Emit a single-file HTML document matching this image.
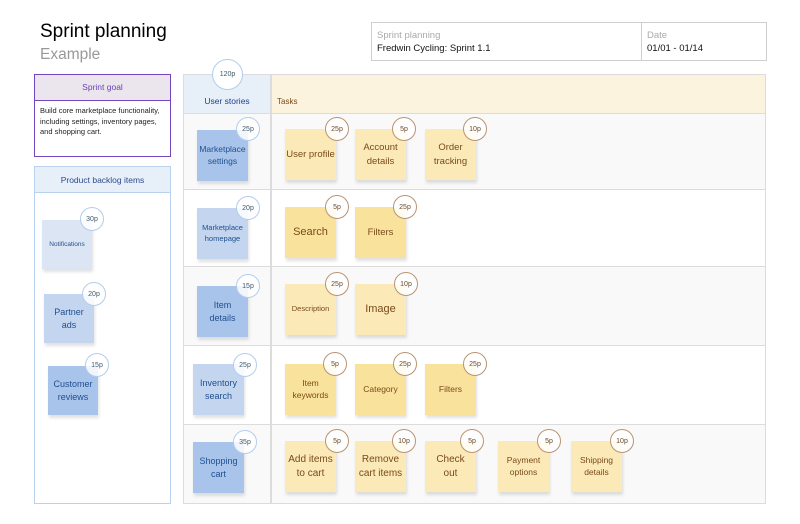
<!DOCTYPE html>
<html><head><meta charset="utf-8"><style>
*{margin:0;padding:0;box-sizing:border-box}
body{width:800px;height:524px;background:#fff;font-family:"Liberation Sans",Arial,sans-serif;position:relative;overflow:hidden}
.a{position:absolute}
.s{position:absolute;width:51px;height:51px;display:flex;align-items:center;justify-content:center;text-align:center;line-height:1.4;box-shadow:1px 3px 3px rgba(0,0,0,.12);white-space:nowrap}
.t{background:#fbeab7;color:#7a4a1a;font-size:9.5px}
.td{background:#f9e39c}
.u{background:#a9c4ea;color:#1f4f8f;font-size:8.5px}
.ul{background:#c4d5ef}
.b{position:absolute;width:24px;height:24px;border-radius:50%;background:rgba(255,255,255,.85);font-size:7px;display:flex;align-items:center;justify-content:center}
.bt{border:1px solid #b99473;color:#6a4a2a}
.bu{border:1px solid #b2cdec;color:#3d5a6a}
.row{position:absolute;left:184px;width:581px;border-bottom:1px solid #dcdcdc}
</style></head><body>
<div class="a" style="left:40px;top:21px;font-size:19px;color:#000">Sprint planning</div>
<div class="a" style="left:40px;top:46px;font-size:15.5px;color:#999">Example</div>

<div class="a" style="left:371px;top:22px;width:396px;height:39px;border:1px solid #cfcfcf"></div>
<div class="a" style="left:641px;top:22px;width:1px;height:39px;background:#cfcfcf"></div>
<div class="a" style="left:377px;top:30px;font-size:9.5px;color:#aaa">Sprint planning</div>
<div class="a" style="left:377px;top:43px;font-size:9.5px;color:#111">Fredwin Cycling: Sprint 1.1</div>
<div class="a" style="left:647px;top:30px;font-size:9.5px;color:#aaa">Date</div>
<div class="a" style="left:647px;top:43px;font-size:9.5px;color:#111">01/01 - 01/14</div>

<div class="a" style="left:34px;top:74px;width:137px;height:83px;border:1.5px solid #7446be">
<div style="height:26px;background:#ebe6ee;border-bottom:1.5px solid #7446be;color:#6a3fb5;font-size:8.5px;text-align:center;line-height:25px">Sprint goal</div>
<div style="font-size:7.5px;color:#222;padding:5px 5px;line-height:1.4">Build core marketplace functionality, including settings, inventory pages, and shopping cart.</div>
</div>

<div class="a" style="left:34px;top:166px;width:137px;height:338px;border:1px solid #b8d2f0">
<div style="height:26px;background:#e7eff9;border-bottom:1px solid #b8d2f0;color:#2d4a8f;font-size:8.5px;text-align:center;line-height:26px">Product backlog items</div>
</div>
<div class="s u" style="left:42px;top:220px;background:#dce5f3;font-size:6.5px;width:50px;height:49px">Notifications</div><div class="b bu" style="left:80px;top:207px">30p</div>
<div class="s u ul" style="left:44px;top:294px;font-size:9px;width:50px;height:49px">Partner<br>ads</div><div class="b bu" style="left:82px;top:282px">20p</div>
<div class="s u" style="left:48px;top:366px;font-size:9px;width:50px;height:49px">Customer<br>reviews</div><div class="b bu" style="left:85px;top:353px">15p</div>

<!-- table -->
<div class="a" style="left:184px;top:75px;width:87px;height:38px;background:#e7eff9"></div>
<div class="a" style="left:271px;top:75px;width:494px;height:38px;background:#fbf3de"></div>
<div class="row" style="top:75px;height:39px"></div>
<div class="row" style="top:114px;height:76px;background:#f9f9f9"></div>
<div class="row" style="top:190px;height:77px;background:#fff"></div>
<div class="row" style="top:267px;height:79px;background:#f9f9f9"></div>
<div class="row" style="top:346px;height:79px;background:#fff"></div>
<div class="row" style="top:425px;height:78px;background:#f9f9f9;border-bottom:none"></div>
<div class="a" style="left:183px;top:74px;width:583px;height:430px;border:1px solid #dcdcdc"></div>
<div class="a" style="left:270px;top:75px;width:1.5px;height:428px;background:#dcdcdc"></div>
<div class="a" style="left:183px;top:96px;width:88px;text-align:center;font-size:8.5px;color:#1f3f8f">User stories</div>
<div class="a" style="left:277px;top:97px;font-size:8px;color:#7a4a1a">Tasks</div>
<div class="b bu" style="left:212px;top:59px;width:31px;height:31px;background:#fff">120p</div>

<!-- row1 -->
<div class="s u" style="left:197px;top:130px">Marketplace<br>settings</div><div class="b bu" style="left:236px;top:117px">25p</div>
<div class="s t" style="left:285px;top:129px">User profile</div><div class="b bt" style="left:325px;top:117px">25p</div>
<div class="s t" style="left:355px;top:129px">Account<br>details</div><div class="b bt" style="left:392px;top:117px">5p</div>
<div class="s t" style="left:425px;top:129px">Order<br>tracking</div><div class="b bt" style="left:463px;top:117px">10p</div>
<!-- row2 -->
<div class="s u ul" style="left:197px;top:208px;font-size:7.5px">Marketplace<br>homepage</div><div class="b bu" style="left:236px;top:196px">20p</div>
<div class="s t td" style="left:285px;top:207px;font-size:11px">Search</div><div class="b bt" style="left:325px;top:195px">5p</div>
<div class="s t td" style="left:355px;top:207px">Filters</div><div class="b bt" style="left:393px;top:195px">25p</div>
<!-- row3 -->
<div class="s u" style="left:197px;top:286px;font-size:9px">Item<br>details</div><div class="b bu" style="left:236px;top:274px">15p</div>
<div class="s t" style="left:285px;top:284px;font-size:7.5px">Description</div><div class="b bt" style="left:325px;top:272px">25p</div>
<div class="s t" style="left:355px;top:284px;font-size:11px">Image</div><div class="b bt" style="left:394px;top:272px">10p</div>
<!-- row4 -->
<div class="s u ul" style="left:193px;top:364px;font-size:9px">Inventory<br>search</div><div class="b bu" style="left:233px;top:353px">25p</div>
<div class="s t td" style="left:285px;top:364px;font-size:8.5px">Item<br>keywords</div><div class="b bt" style="left:323px;top:352px">5p</div>
<div class="s t td" style="left:355px;top:364px;font-size:8.5px">Category</div><div class="b bt" style="left:393px;top:352px">25p</div>
<div class="s t td" style="left:425px;top:364px;font-size:8.5px">Filters</div><div class="b bt" style="left:463px;top:352px">25p</div>
<!-- row5 -->
<div class="s u" style="left:193px;top:442px;font-size:9px">Shopping<br>cart</div><div class="b bu" style="left:233px;top:430px">35p</div>
<div class="s t" style="left:285px;top:441px;font-size:10px">Add items<br>to cart</div><div class="b bt" style="left:325px;top:429px">5p</div>
<div class="s t" style="left:355px;top:441px;font-size:10px">Remove<br>cart items</div><div class="b bt" style="left:392px;top:429px">10p</div>
<div class="s t" style="left:425px;top:441px;font-size:10px">Check<br>out</div><div class="b bt" style="left:460px;top:429px">5p</div>
<div class="s t" style="left:498px;top:441px;font-size:8.5px">Payment<br>options</div><div class="b bt" style="left:537px;top:429px">5p</div>
<div class="s t" style="left:571px;top:441px;font-size:8.5px">Shipping<br>details</div><div class="b bt" style="left:610px;top:429px">10p</div>
</body></html>
